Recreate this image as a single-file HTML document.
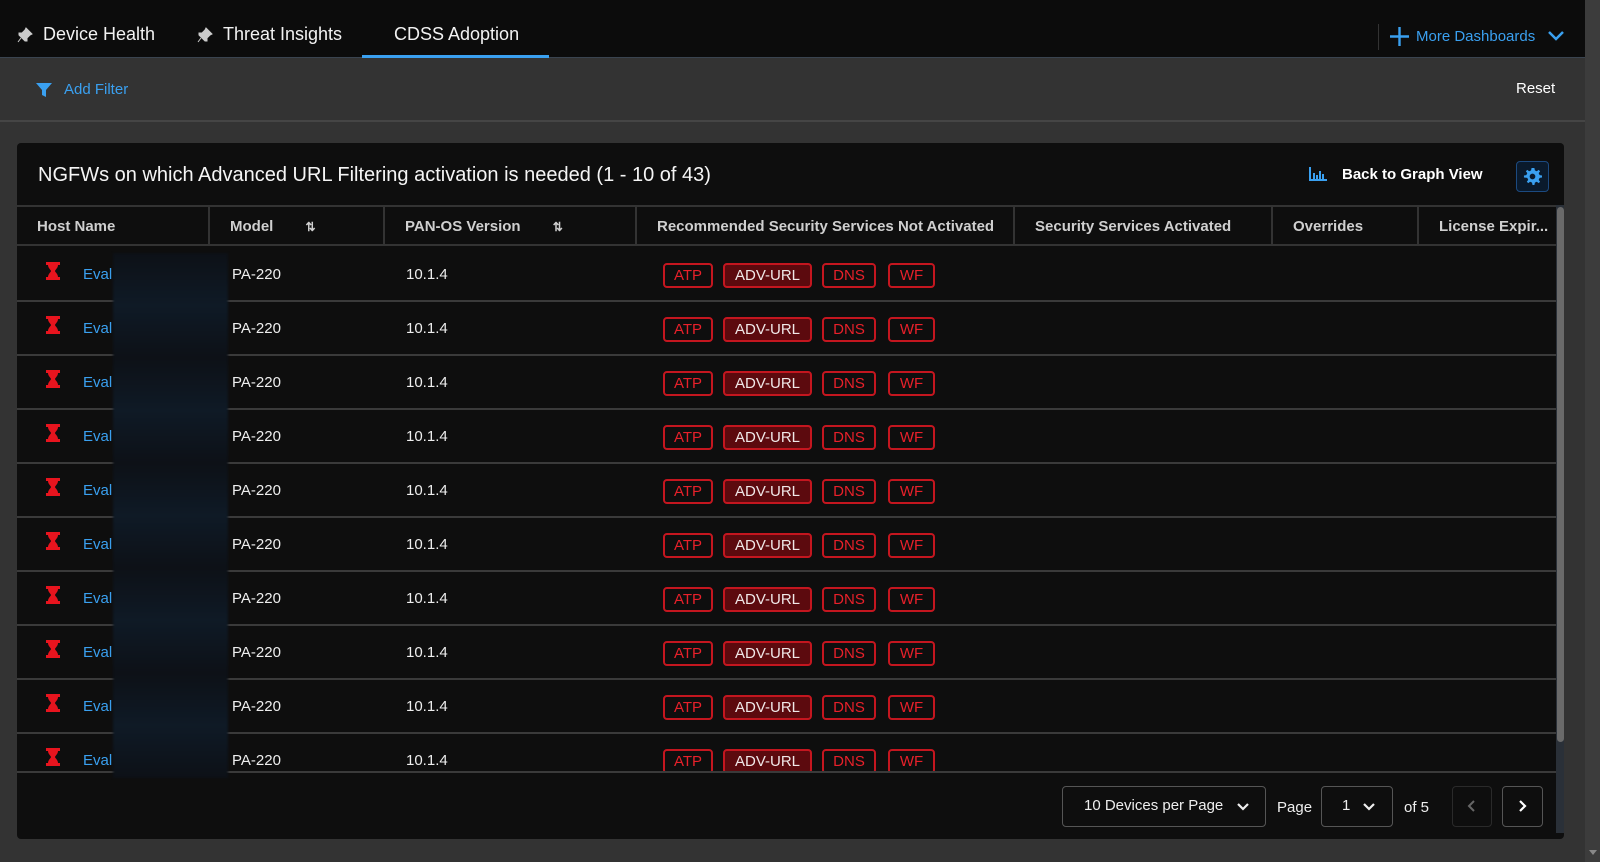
<!DOCTYPE html>
<html><head><meta charset="utf-8"><style>
*{box-sizing:border-box;margin:0;padding:0}
body{width:1600px;height:862px;background:#333;font-family:"Liberation Sans",sans-serif;color:#e8e8e8;overflow:hidden;position:relative}
.abs{position:absolute}
.tabs{left:0;top:0;width:1585px;height:58px;background:#0c0c0c;border-bottom:1px solid #3a4450}
.tab{top:24px;font-size:18px;color:#f2f2f2;white-space:nowrap}
.filter{left:0;top:58px;width:1585px;height:64px;background:#333;border-bottom:2px solid #454545}
.card{left:17px;top:143px;width:1547px;height:696px;background:#0e0e0e;border-radius:4px;overflow:hidden}
.hdr{top:62px;left:0;width:1539px;height:41px;border-top:2px solid #333;border-bottom:2px solid #333}
.hc{top:0;height:39px;line-height:39px;font-size:15px;font-weight:bold;color:#cfcfcf;border-left:2px solid #333;padding-left:20px;white-space:nowrap}
.row{left:0;width:1539px;height:54px;border-bottom:2px solid #3a3a3a}
.cell{top:18px;font-size:15px;color:#eee}
.b{top:15px;height:25px;border:2px solid #c4161f;border-radius:4px;color:#e8202a;font-size:15px;line-height:21px;text-align:center}
.adv{background:#5c0a0e;color:#f0e8e8}
.blur{left:96px;top:110px;width:115px;height:525px;background:#0d1117;}
.btn{border:1px solid #555;border-radius:4px;background:#0e0e0e}
</style></head><body>
<div class="abs tabs">
 <svg class="abs" style="left:17px;top:27px" width="16" height="16" viewBox="0 0 16 16"><path d="M9 1l6 6-2 1-3 3 0 3-2 0-6-6 0-2 3 0 3-3z M4 11l-3 4" fill="#ccc" stroke="#ccc" stroke-width="1"/></svg>
 <div class="abs tab" style="left:43px">Device Health</div>
 <svg class="abs" style="left:197px;top:27px" width="16" height="16" viewBox="0 0 16 16"><path d="M9 1l6 6-2 1-3 3 0 3-2 0-6-6 0-2 3 0 3-3z M4 11l-3 4" fill="#ccc" stroke="#ccc" stroke-width="1"/></svg>
 <div class="abs tab" style="left:223px">Threat Insights</div>
 <div class="abs tab" style="left:394px">CDSS Adoption</div>
 <div class="abs" style="left:362px;top:55px;width:187px;height:3px;background:#3aa0f0"></div>
 <div class="abs" style="left:1378px;top:24px;width:1px;height:26px;background:#333"></div>
 <svg class="abs" style="left:1390px;top:27px" width="19" height="19" viewBox="0 0 19 19"><path d="M9.5 0v19M0 9.5h19" stroke="#3aa0f0" stroke-width="2.4"/></svg>
 <div class="abs" style="left:1416px;top:28px;font-size:15px;color:#3aa0f0">More Dashboards</div>
 <svg class="abs" style="left:1547px;top:30px" width="18" height="12" viewBox="0 0 18 12"><path d="M2 2l7 7 7-7" fill="none" stroke="#3aa0f0" stroke-width="2.5"/></svg>
</div>
<div class="abs filter">
 <svg class="abs" style="left:36px;top:24px" width="16" height="16" viewBox="0 0 16 16"><path d="M0 1h16l-6 7v7l-4-2v-5z" fill="#3aa0f0"/></svg>
 <div class="abs" style="left:64px;top:23px;font-size:15px;color:#3aa0f0">Add Filter</div>
 <div class="abs" style="left:1516px;top:22px;font-size:15px;color:#fff">Reset</div>
</div>
<div class="abs" style="left:1585px;top:0;width:15px;height:862px;background:#3c3c3c"></div>
<div class="abs" style="left:1589px;top:850px;width:0;height:0;border-left:4px solid transparent;border-right:4px solid transparent;border-top:5px solid #888"></div>
<div class="abs card">
 <div class="abs" style="left:21px;top:21px;font-size:20px;color:#f5f5f5;white-space:nowrap">NGFWs on which Advanced URL Filtering activation is needed (1 - 10 of 43)</div>
 <svg class="abs" style="left:1292px;top:24px" width="18" height="14" viewBox="0 0 18 14"><path d="M1 0v13h17" fill="none" stroke="#3aa0f0" stroke-width="2"/><path d="M5 6v6M8 8v4M11 4v8M14 7v5" stroke="#3aa0f0" stroke-width="2"/></svg>
 <div class="abs" style="left:1325px;top:23px;font-size:15px;color:#fff;font-weight:bold">Back to Graph View</div>
 <div class="abs" style="left:1499px;top:18px;width:33px;height:31px;border:1px solid #1c4a80;border-radius:4px;background:#0a1a2c"></div>
 <svg class="abs" style="left:1506px;top:24px" width="19" height="19" viewBox="0 0 20 20"><path d="M10 1l2 0 .5 2.5 2 1 2-1.5 1.5 1.5-1.5 2 1 2 2.5.5v2l-2.5.5-1 2 1.5 2-1.5 1.5-2-1.5-2 1-.5 2.5h-2l-.5-2.5-2-1-2 1.5-1.5-1.5 1.5-2-1-2L1 11V9l2.5-.5 1-2L3 4.5 4.5 3l2 1.5 2-1L9 1z" fill="#3aa0f0"/><circle cx="10" cy="10" r="3" fill="#0a1a2c"/></svg>
 <div class="abs hdr">
  <div class="abs hc" style="left:0;border-left:none">Host Name</div>
  <div class="abs hc" style="left:191px">Model <span style="margin-left:28px;font-size:12px">⇅</span></div>
  <div class="abs hc" style="left:366px">PAN-OS Version <span style="margin-left:28px;font-size:12px">⇅</span></div>
  <div class="abs hc" style="left:618px">Recommended Security Services Not Activated</div>
  <div class="abs hc" style="left:996px">Security Services Activated</div>
  <div class="abs hc" style="left:1254px">Overrides</div>
  <div class="abs hc" style="left:1400px">License Expir...</div>
 </div>
 <div class="abs" style="left:1539px;top:62px;width:8px;height:628px;background:#2a3038"></div>
 <div class="abs" style="left:1540px;top:64px;width:7px;height:535px;background:#6a6a6a;border-radius:4px"></div>
 <div class="abs" style="left:0;top:105px;width:1539px;height:524px;overflow:hidden">
  <div id="rows"></div>
 </div>
 <div class="abs" style="left:0;top:628px;width:1539px;height:2px;background:#3a3a3a"></div>
 <div class="abs blur" style="filter:blur(1px);background:linear-gradient(180deg,#0d1117,#0f1a26 10%,#0d1117 20%,#0f1a26 30%,#0d1117 40%,#0f1a26 50%,#0d1117 60%,#0f1a26 70%,#0d1117 80%,#0f1a26 90%,#0d1117)"></div>
 <div class="abs btn" style="left:1045px;top:643px;width:204px;height:41px"></div>
 <div class="abs" style="left:1067px;top:654px;font-size:15px;color:#eee">10 Devices per Page</div>
 <svg class="abs" style="left:1219px;top:659px" width="14" height="10" viewBox="0 0 14 10"><path d="M2 2l5 5 5-5" fill="none" stroke="#eee" stroke-width="2.2"/></svg>
 <div class="abs" style="left:1260px;top:656px;font-size:15px;color:#eee">Page</div>
 <div class="abs btn" style="left:1304px;top:643px;width:72px;height:41px"></div>
 <div class="abs" style="left:1325px;top:654px;font-size:15px;color:#eee">1</div>
 <svg class="abs" style="left:1345px;top:659px" width="14" height="10" viewBox="0 0 14 10"><path d="M2 2l5 5 5-5" fill="none" stroke="#eee" stroke-width="2.2"/></svg>
 <div class="abs" style="left:1387px;top:656px;font-size:15px;color:#eee">of 5</div>
 <div class="abs btn" style="left:1435px;top:643px;width:40px;height:41px;border-color:#2a2a2a"></div>
 <svg class="abs" style="left:1449px;top:656px" width="10" height="14" viewBox="0 0 10 14"><path d="M8 2L3 7l5 5" fill="none" stroke="#666" stroke-width="2"/></svg>
 <div class="abs btn" style="left:1485px;top:643px;width:41px;height:41px"></div>
 <svg class="abs" style="left:1501px;top:656px" width="10" height="14" viewBox="0 0 10 14"><path d="M2 2l5 5-5 5" fill="none" stroke="#fff" stroke-width="2.2"/></svg>
</div>
<script>
var h='';
for(var i=0;i<10;i++){
h+='<div class="abs row" style="top:'+(i*54)+'px">'+
'<svg class="abs" style="left:29px;top:14px" width="14" height="18" viewBox="0 0 14 18"><path d="M0 0h14v3h-2c0 3-3 5-3 6 0 1 3 3 3 6h2v3H0v-3h2c0-3 3-5 3-6 0-1-3-3-3-6H0z" fill="#e8141e"/></svg>'+
'<div class="abs cell" style="left:66px;color:#3aa0f0">Eval</div>'+
'<div class="abs cell" style="left:215px">PA-220</div>'+
'<div class="abs cell" style="left:389px">10.1.4</div>'+
'<div class="abs b" style="left:646px;width:50px">ATP</div>'+
'<div class="abs b adv" style="left:706px;width:89px">ADV-URL</div>'+
'<div class="abs b" style="left:805px;width:54px">DNS</div>'+
'<div class="abs b" style="left:871px;width:47px">WF</div>'+
'</div>';}
document.getElementById('rows').innerHTML=h;
</script>
</body></html>
